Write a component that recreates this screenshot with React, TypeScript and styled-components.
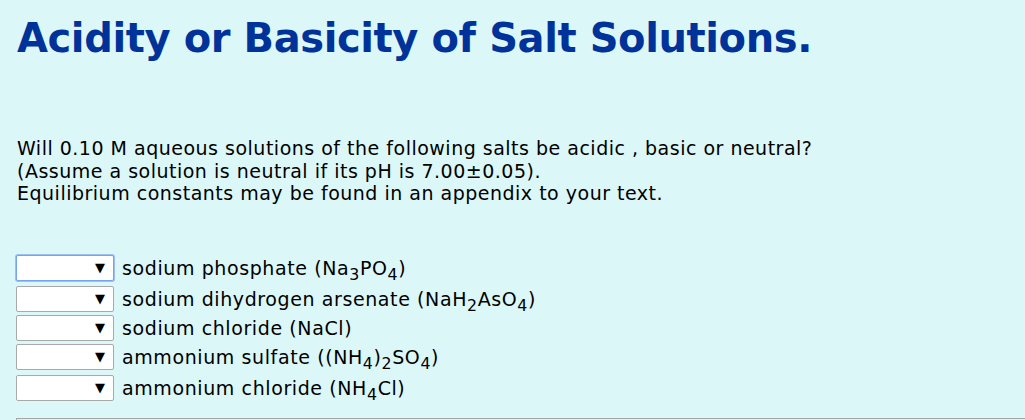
import styled, { createGlobalStyle } from "styled-components";

const GlobalStyle = createGlobalStyle`
  html, body {
    margin: 0;
    padding: 0;
    background: #dcf7f8;
  }
  body {
    font-family: "DejaVu Sans", Verdana, sans-serif;
    color: #000;
  }
`;

const Page = styled.div`
  padding: 0 16px 0 16px;
  overflow: hidden;
  height: 420px;
`;

const Title = styled.h1`
  margin: 14px 0 0 1px;
  font-size: 40px;
  font-weight: bold;
  letter-spacing: -0.4px;
  color: #003399;
  line-height: 48px;
`;

const Intro = styled.p`
  margin: 75px 0 0 1px;
  font-size: 19px;
  letter-spacing: 0.5px;
  line-height: 22.5px;
`;

const SaltList = styled.div`
  margin-top: 48px;
  display: flex;
  flex-direction: column;
`;

const Row = styled.div<{ $tall?: boolean }>`
  display: flex;
  align-items: center;
  gap: 8px;
  height: ${(p) => (p.$tall ? "31px" : "27px")};
  font-size: 19px;
  letter-spacing: 0.6px;
`;

const SelectWrap = styled.span<{ $focused?: boolean }>`
  position: relative;
  display: inline-block;
  width: 98px;
  height: 26px;
  box-sizing: border-box;
  background: #fff;
  border: 1px solid ${(p) => (p.$focused ? "#75a3ef" : "#a9a9a9")};
  border-radius: 2px;
  box-shadow: ${(p) => (p.$focused ? "0 0 0 1px #9dbff3" : "none")};
  flex-shrink: 0;

  &::after {
    content: "▼";
    position: absolute;
    right: 8px;
    top: 5px;
    font-size: 13px;
    line-height: 14px;
    letter-spacing: 0;
    color: #000;
    pointer-events: none;
  }
`;

const Select = styled.select`
  appearance: none;
  width: 100%;
  height: 100%;
  border: none;
  background: transparent;
  outline: none;
  font: inherit;
`;

const Sub = styled.sub`
  font-size: 0.83em;
  line-height: 0;
`;

const Answer = styled.div`
  margin-top: 14px;
  height: 40px;
  background: #ececec;
  border: 1px solid #a6a6a6;
  margin-right: -40px;
`;

type Salt = { name: React.ReactNode; tall: boolean };

const salts: Salt[] = [
  {
    name: (
      <>
        sodium phosphate (Na<Sub>3</Sub>PO<Sub>4</Sub>)
      </>
    ),
    tall: true,
  },
  {
    name: (
      <>
        sodium dihydrogen arsenate (NaH<Sub>2</Sub>AsO<Sub>4</Sub>)
      </>
    ),
    tall: true,
  },
  { name: <>sodium chloride (NaCl)</>, tall: false },
  {
    name: (
      <>
        ammonium sulfate ((NH<Sub>4</Sub>)<Sub>2</Sub>SO<Sub>4</Sub>)
      </>
    ),
    tall: true,
  },
  {
    name: (
      <>
        ammonium chloride (NH<Sub>4</Sub>Cl)
      </>
    ),
    tall: true,
  },
];

export default function App() {
  return (
    <>
      <GlobalStyle />
      <Page>
        <Title>Acidity or Basicity of Salt Solutions.</Title>
        <Intro>
          Will 0.10 M aqueous solutions of the following salts be acidic ,
          basic or neutral?
          <br />
          (Assume a solution is neutral if its pH is 7.00±0.05).
          <br />
          Equilibrium constants may be found in an appendix to your text.
        </Intro>
        <SaltList>
          {salts.map((s, i) => (
            <Row key={i} $tall={s.tall}>
              <SelectWrap $focused={i === 0}>
                <Select defaultValue="">
                  <option value=""></option>
                  <option value="acidic">acidic</option>
                  <option value="basic">basic</option>
                  <option value="neutral">neutral</option>
                </Select>
              </SelectWrap>
              <span>{s.name}</span>
            </Row>
          ))}
        </SaltList>
        <Answer />
      </Page>
    </>
  );
}
